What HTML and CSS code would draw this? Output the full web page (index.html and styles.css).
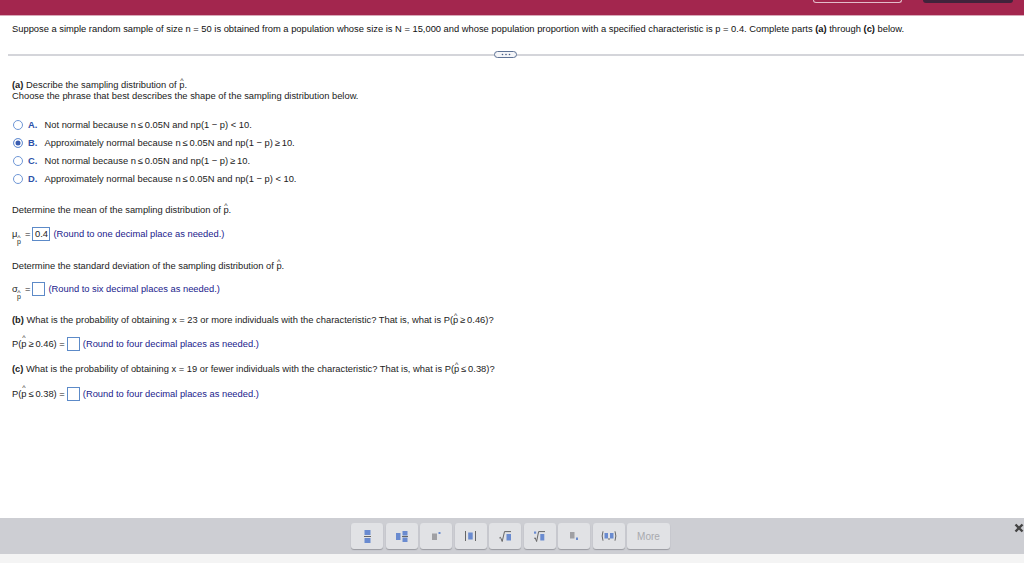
FILE: index.html
```html
<!DOCTYPE html>
<html lang="en">
<head>
    <meta charset="UTF-8">
    <title>Sampling Distribution</title>
    <link rel="stylesheet" href="styles.css">
</head>
<body>
    <div class="page">
        <div class="topbar">
            <div class="topbtn outline"></div>
            <div class="topbtn dark"></div>
        </div>

        <div class="prompt">Suppose a simple random sample of size n = 50 is obtained from a population whose size is N = 15,000 and whose population proportion with a specified characteristic is p = 0.4. Complete parts <b>(a)</b> through <b>(c)</b> below.</div>

        <div class="divider">
            <div class="pill">
                <svg width="12" height="3" viewBox="0 0 12 3"><circle cx="2.5" cy="1.5" r="0.8"/><circle cx="6" cy="1.5" r="0.8"/><circle cx="9.5" cy="1.5" r="0.8"/></svg>
            </div>
        </div>

        <div class="content">
            <div class="line part-a"><b>(a)</b> Describe the sampling distribution of <span class="hat">p</span>.</div>
            <div class="line">Choose the phrase that best describes the shape of the sampling distribution below.</div>

            <div class="choices">
                <div class="choice"><span class="radio"></span><span class="letter">A.</span><span>Not normal because n&thinsp;≤&thinsp;0.05N and np(1 − p) &lt; 10.</span></div>
                <div class="choice"><span class="radio checked"></span><span class="letter">B.</span><span>Approximately normal because n&thinsp;≤&thinsp;0.05N and np(1 − p)&thinsp;≥&thinsp;10.</span></div>
                <div class="choice"><span class="radio"></span><span class="letter">C.</span><span>Not normal because n&thinsp;≤&thinsp;0.05N and np(1 − p)&thinsp;≥&thinsp;10.</span></div>
                <div class="choice"><span class="radio"></span><span class="letter">D.</span><span>Approximately normal because n&thinsp;≤&thinsp;0.05N and np(1 − p) &lt; 10.</span></div>
            </div>

            <div class="line mean-q">Determine the mean of the sampling distribution of <span class="hat">p</span>.</div>
            <div class="answer mean-a">
                <span class="sym">μ<sub class="hat">p</sub></span><span>=</span><span class="box filled">0.4</span><span class="hint">(Round to one decimal place as needed.)</span>
            </div>

            <div class="line sd-q">Determine the standard deviation of the sampling distribution of <span class="hat">p</span>.</div>
            <div class="answer sd-a">
                <span class="sym">σ<sub class="hat">p</sub></span><span>=</span><span class="box"></span><span class="hint">(Round to six decimal places as needed.)</span>
            </div>

            <div class="line b-q"><b>(b)</b> What is the probability of obtaining x = 23 or more individuals with the characteristic? That is, what is P(<span class="hat">p</span>&thinsp;≥&thinsp;0.46)?</div>
            <div class="answer b-a">
                <span>P(<span class="hat">p</span>&thinsp;≥&thinsp;0.46) =</span><span class="box"></span><span class="hint">(Round to four decimal places as needed.)</span>
            </div>

            <div class="line c-q"><b>(c)</b> What is the probability of obtaining x = 19 or fewer individuals with the characteristic? That is, what is P(<span class="hat">p</span>&thinsp;≤&thinsp;0.38)?</div>
            <div class="answer c-a">
                <span>P(<span class="hat">p</span>&thinsp;≤&thinsp;0.38) =</span><span class="box"></span><span class="hint">(Round to four decimal places as needed.)</span>
            </div>
        </div>

        <div class="toolbar">
            <div class="tools">
                <div class="tool">
                    <svg width="7" height="13" viewBox="0 0 7 13"><rect x="0.5" y="0" width="6" height="5"/><rect class="ink" x="0" y="6" width="7" height="1"/><rect x="0.5" y="8" width="6" height="5"/></svg>
                </div>
                <div class="tool">
                    <svg width="12" height="11" viewBox="0 0 12 11"><rect x="0" y="2" width="4.5" height="7"/><rect x="6.5" y="0" width="5" height="4.5"/><rect class="ink" x="6" y="5" width="6" height="1"/><rect x="6.5" y="6.5" width="5" height="4.5"/></svg>
                </div>
                <div class="tool">
                    <svg width="9" height="8" viewBox="0 0 9 8"><rect class="grey" x="0" y="1.5" width="5" height="6.5"/><rect x="6.5" y="0" width="2" height="2"/></svg>
                </div>
                <div class="tool">
                    <svg width="11" height="10" viewBox="0 0 11 10"><rect class="ink" x="0" y="0" width="1" height="10"/><rect x="3.2" y="1.5" width="4.5" height="7"/><rect class="ink" x="10" y="0" width="1" height="10"/></svg>
                </div>
                <div class="tool">
                    <svg width="12" height="11" viewBox="0 0 12 11"><path class="line-ink" d="M0.3 7 L1.5 6.3 L3.2 10.5 L5.5 0.6 H12"/><rect x="7.5" y="3" width="4.5" height="6.5"/></svg>
                </div>
                <div class="tool">
                    <svg width="11" height="11" viewBox="0 0 11 11"><rect x="0" y="0.5" width="2.2" height="2.2"/><path class="line-ink" d="M0.2 7.5 L1.2 6.8 L2.6 10.5 L4.6 0.6 H11"/><rect x="6.3" y="3" width="4" height="6.5"/></svg>
                </div>
                <div class="tool">
                    <svg width="8" height="8" viewBox="0 0 8 8"><rect class="grey" x="0" y="0" width="4.5" height="6.5"/><rect x="6" y="5.5" width="2" height="2.5"/></svg>
                </div>
                <div class="tool">
                    <svg width="16" height="10" viewBox="0 0 16 10"><path class="line-ink" d="M2 0.3 Q0.3 5 2 9.7 M14 0.3 Q15.7 5 14 9.7"/><rect x="3.5" y="2" width="3.5" height="5.5"/><rect x="9" y="2" width="3.5" height="5.5"/><rect class="ink" x="7.5" y="7" width="1" height="2"/></svg>
                </div>
                <div class="tool more">More</div>
            </div>
            <div class="close">
                <svg width="10" height="10" viewBox="0 0 10 10"><path d="M1.5 1.5 L8.5 8.5 M8.5 1.5 L1.5 8.5"/></svg>
            </div>
        </div>
        <div class="bottom"></div>
    </div>
</body>
</html>
```

FILE: styles.css
```css
* {
    margin: 0;
    padding: 0;
    box-sizing: border-box;
}

body {
    font-family: 'Liberation Sans', Arial, sans-serif;
    font-size: 9.35px;
    color: #222;
    background: white;
    overflow: hidden;
}

.page {
    height: 563px;
    display: flex;
    flex-direction: column;
}

.topbar {
    height: 16px;
    flex: none;
    background: #a3264e;
    border-bottom: 1px solid #d8a9b8;
    display: flex;
    justify-content: flex-end;
    align-items: flex-start;
    gap: 21px;
    padding-right: 11px;
}

.topbtn {
    width: 89px;
    height: 3px;
    border-radius: 0 0 6px 6px;
}

.topbtn.outline {
    border: 1px solid #e3bcc9;
    border-top: none;
}

.topbtn.dark {
    width: 90px;
    background: #40233b;
}

.prompt {
    height: 13px;
    margin: 7px 0 0 12px;
    line-height: 13px;
    white-space: nowrap;
    color: #111;
}

.divider {
    height: 2px;
    margin: 17.5px 0 0 8px;
    background: #d4d5da;
    display: flex;
    justify-content: center;
    align-items: center;
    padding-right: 21px;
}

.pill {
    width: 23px;
    height: 7px;
    border: 1px solid #5f7396;
    border-radius: 4px;
    background: #f4f5f8;
    display: flex;
    align-items: center;
    justify-content: center;
}

.pill svg {
    fill: #4b5f85;
}

.content {
    flex: 1;
    padding-left: 12px;
}

.line {
    height: 11px;
    line-height: 11px;
    white-space: nowrap;
}

.part-a {
    margin-top: 24px;
}

.hat {
    position: relative;
}

.hat::before {
    content: "^";
    position: absolute;
    left: 0;
    right: 0;
    top: -5px;
    text-align: center;
    font-size: 7px;
    font-weight: normal;
}

.choices {
    margin-top: 14px;
    margin-left: 1px;
}

.choice {
    height: 18px;
    display: flex;
    align-items: center;
    white-space: nowrap;
}

.radio {
    width: 10px;
    height: 10px;
    margin-right: 5px;
    border: 1px solid #6f97d6;
    border-radius: 50%;
    background: white;
    flex: none;
}

.radio.checked {
    background: #3a5db0;
    box-shadow: inset 0 0 0 1.5px white;
}

.letter {
    width: 16.5px;
    font-weight: bold;
    color: #2b4fa8;
    flex: none;
}

.mean-q {
    margin-top: 17px;
}

.answer {
    display: flex;
    align-items: center;
    white-space: nowrap;
    gap: 2px;
    height: 14px;
}

.mean-a {
    margin-top: 11px;
}

.sym {
    width: 11px;
    position: relative;
}

.sym sub {
    position: absolute;
    left: 5px;
    top: 9px;
    font-size: 7px;
    line-height: 8px;
}

.sym sub::before {
    top: -4px;
}

.box {
    width: 13px;
    height: 14px;
    line-height: 12px;
    border: 1px solid #5c8ac8;
    background: white;
    text-align: center;
    color: #222;
}

.box.filled {
    width: 18px;
}

.hint {
    color: #1a1a8c;
    margin-left: 1px;
}

.sd-q {
    margin-top: 20px;
}

.sd-a {
    margin-top: 10px;
}

.b-q {
    margin-top: 19px;
}

.b-a {
    margin-top: 11px;
}

.c-q {
    margin-top: 13px;
}

.c-a {
    margin-top: 12px;
}

.toolbar {
    height: 36px;
    flex: none;
    background: #cdced3;
    position: relative;
    display: flex;
    justify-content: center;
    align-items: center;
}

.tools {
    display: flex;
    gap: 2.5px;
    margin-right: 3px;
}

.tool {
    width: 32px;
    height: 26px;
    background: #e1e2e5;
    border-radius: 3px;
    box-shadow: 0 1px 1px #9a9ba0;
    display: flex;
    align-items: center;
    justify-content: center;
}

.tool svg {
    fill: #6a8bd0;
}

.tool .ink {
    fill: #666;
}

.tool .grey {
    fill: #a0a0a4;
}

.tool .line-ink {
    fill: none;
    stroke: #666;
    stroke-width: 1;
}

.tool.more {
    width: 43px;
    color: #a8a9ae;
    font-size: 10px;
}

.close {
    position: absolute;
    right: 0;
    top: 5px;
    width: 10px;
    height: 10px;
}

.close svg {
    stroke: #444;
    stroke-width: 2.4;
    fill: none;
}

.bottom {
    height: 9px;
    flex: none;
    background: #f4f4f4;
}
```
